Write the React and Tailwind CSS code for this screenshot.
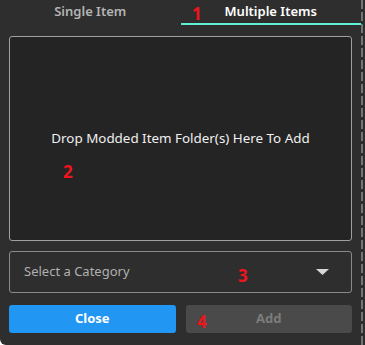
import { useState } from 'react';

const font = { fontFamily: '"Noto Sans", "Open Sans", sans-serif' };

function Mark({ n, className }) {
    return (
        <span className={`absolute text-[17px] font-bold leading-none text-[#f0141c] ${className}`}>{n}</span>
    );
}

export default function App() {
    const [tab, setTab] = useState('multiple');

    return (
        <div className="relative flex h-[345px] w-[365px] overflow-hidden rounded-bl-[6px] bg-[#2e2e2e]" style={font}>
            <div className="flex w-[361px] flex-col">
                {/* tabs */}
                <div className="relative flex h-[25px]">
                    <button
                        type="button"
                        onClick={() => setTab('single')}
                        className={`flex-1 text-[13px] font-semibold ${tab === 'single' ? 'text-white border-b-2 border-[#5ef2d2]' : 'text-[#b4b4b4] pb-[2px]'}`}
                    >
                        Single Item
                    </button>
                    <button
                        type="button"
                        onClick={() => setTab('multiple')}
                        className={`flex-1 text-[13px] font-semibold ${tab === 'multiple' ? 'text-white border-b-2 border-[#5ef2d2]' : 'text-[#b4b4b4] pb-[2px]'}`}
                    >
                        Multiple Items
                    </button>
                    <Mark n="1" className="left-[192px] top-[5px]" />
                </div>

                {/* drop zone */}
                <div className="relative mx-[9px] mt-[11px] flex h-[205px] items-center justify-center rounded-[3px] border border-[#a0a0a0] bg-[#242424]">
                    <span className="text-[13.4px] text-[#f0f0f0]">Drop Modded Item Folder(s) Here To Add</span>
                    <Mark n="2" className="left-[53px] top-[126px]" />
                </div>

                {/* category select */}
                <div className="relative mx-[9px] mt-[10px] flex h-[42px] items-center justify-between rounded-[3px] border border-[#8a8a8a] pl-[14px] pr-[22px]">
                    <span className="text-[13px] text-[#b0b0b0]">Select a Category</span>
                    <svg width="13" height="6" viewBox="0 0 13 6">
                        <path d="M0 0 L13 0 L6.5 6 Z" fill="#d8d8d8" />
                    </svg>
                    <Mark n="3" className="left-[228px] top-[15px]" />
                </div>

                {/* buttons */}
                <div className="relative mx-[9px] mt-[12px] flex gap-[10px]">
                    <button type="button" className="h-[28px] flex-1 rounded-[3px] bg-[#2196f3] text-[13px] font-bold text-white">
                        Close
                    </button>
                    <button type="button" disabled className="h-[28px] flex-1 rounded-[3px] bg-[#4a4a4a] text-[13px] font-bold text-[#7c7c7c]">
                        Add
                    </button>
                    <Mark n="4" className="left-[188px] top-[8px]" />
                </div>
            </div>

            {/* dashed divider on the right */}
            <svg width="2" height="345" className="shrink-0">
                <line x1="1" y1="0" x2="1" y2="345" stroke="#8c8c8c" strokeWidth="1.5" strokeDasharray="9 3" />
            </svg>
        </div>
    );
}
